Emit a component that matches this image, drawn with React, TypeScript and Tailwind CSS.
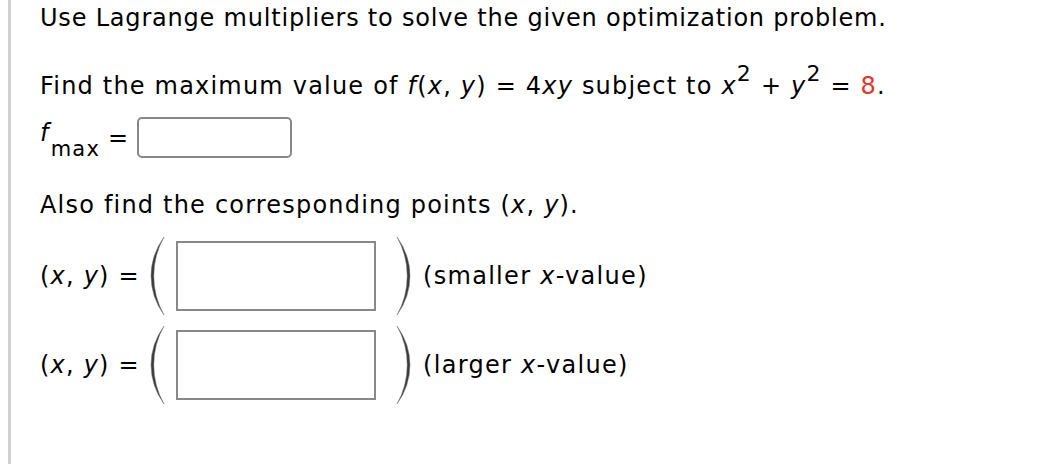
import React from 'react';

const font = { fontFamily: '"DejaVu Sans", Verdana, sans-serif' };

function Paren({ side }: { side: 'left' | 'right' }) {
  return (
    <svg width="17" height="82" viewBox="0 0 17 82" className={side === 'right' ? '-scale-x-100' : ''}>
      <path d="M15 2 Q2 20 2 41 Q2 62 15 80 Q4.8 62 4.8 41 Q4.8 20 15 2 Z" fill="#3a3a3a" stroke="#777" strokeWidth="0.5" />
    </svg>
  );
}

function PointRow({ label, className }: { label: React.ReactNode; className?: string }) {
  return (
    <div className={`flex items-center h-[82px] ${className ?? ''}`}>
      <span className="w-[98px] whitespace-pre">
        (<i>x</i>, <i>y</i>) =
      </span>
      <div className="ml-[11px]">
        <Paren side="left" />
      </div>
      <div className="ml-[10px] w-[200px] h-[70px] border-2 border-[#888]" />
      <div className="ml-[19px]">
        <Paren side="right" />
      </div>
      <span className="ml-[11px] tracking-[1.3px]">{label}</span>
    </div>
  );
}

function App() {
  return (
    <div className="w-[1040px] h-[464px] bg-white flex text-[24px] leading-[28px] tracking-[1.2px] text-black" style={font}>
      <div className="ml-[8px] w-[3px] h-full bg-[#d0d0d0]" />
      <div className="pl-[29px] flex flex-col">
        <p className="mt-[4px] tracking-[0.8px]">Use Lagrange multipliers to solve the given optimization problem.</p>

        <p className="mt-[40px] tracking-[1.2px]">
          Find the maximum value of <i>f</i>(<i>x</i>, <i>y</i>) = 4<i>xy</i> subject to <i>x</i>
          <sup className="text-[22px] -top-[13px]">2</sup> + <i>y</i>
          <sup className="text-[22px] -top-[13px]">2</sup> = <span className="text-[#e8362a]">8</span>.
        </p>

        <div className="mt-[17px] flex items-center h-[41px]">
          <span className="w-[58px] whitespace-nowrap">
            <i className="relative -top-[4px]">f</i>
            <span className="relative top-[11px] ml-[1px] text-[21px]">max</span>
          </span>
          <span className="ml-[10px]">=</span>
          <div className="ml-[8px] w-[155px] h-[41px] border-2 border-[#888] rounded-[5px]" />
        </div>

        <p className="mt-[33px]">Also find the corresponding points (<i>x</i>, <i>y</i>).</p>

        <PointRow className="mt-[16px]" label={<>(smaller <i>x</i>-value)</>} />
        <PointRow className="mt-[7px]" label={<>(larger <i>x</i>-value)</>} />
      </div>
    </div>
  );
}

export default App;
